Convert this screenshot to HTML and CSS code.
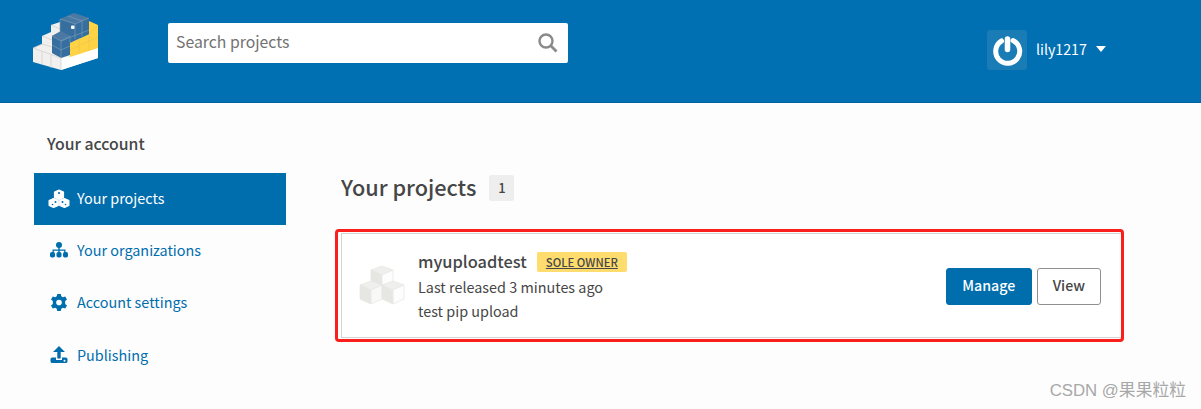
FILE: index.html
```html
<!DOCTYPE html>
<html lang="en">
<head>
<meta charset="utf-8">
<title>Your projects</title>
<link rel="stylesheet" href="styles.css">
</head>
<body>
<header class="site-header">
  <svg class="logo" width="68" height="60" viewBox="0 0 68 60" aria-hidden="true">
    <path d="M1 35 10 31V23L19 19V12L28 9 40 20 66 35V45L29 57 1 49Z" fill="#f1f0ee"/>
    <path d="M38 44 66 35V45L29 57V45Z" fill="#fff"/>
    <path d="M38 30 57 21V8L66 12V35L38 44Z" fill="#ffd343"/>
    <path d="M28 6 42 0 57 5V21L38 30V42L29 45 20 40V23L28 19Z" fill="#366f9f"/>
    <path d="M28 6 42 0 57 5 43 11Z" fill="#4a7aa3"/>
    <path d="M20 23 29 18 38 23 29 28Z" fill="#4a7aa3"/>
    <g fill="none" stroke="#c8c8c8" stroke-width="0.6">
      <path d="M1 35 29 45V57M10 38.500V52M19 42V55M10 23 20 27M10 31 20 34M19 12 28 16M1 35 10 31"/>
    </g>
    <g fill="none" stroke="#e8c552" stroke-width="0.6">
      <path d="M38 37 66 24M47 26V40.500M57 21V38M57 21 66 12"/>
    </g>
    <g fill="none" stroke="#7f9fbb" stroke-width="0.6">
      <path d="M28 6 43 11 57 5M43 11V26M50 8V24M29 28 57 17M36 3 50 8M20 23 29 28 38 23M29 28V45M20 32 29 37 38 33M38 23V30M28 6V19"/>
    </g>
    <rect x="39" y="12.500" width="3.500" height="3.500" rx="1" fill="#fff"/>
    <rect x="51.500" y="41.500" width="3.500" height="3.500" rx="1" fill="#fff"/>
  </svg>
  <form class="search">
    <span class="search-text">Search projects</span>
    <svg class="search-icon" width="20" height="20" viewBox="0 0 20 20" aria-hidden="true">
      <circle cx="8" cy="8" r="6.500" fill="none" stroke="#8a8a8a" stroke-width="2.400"/>
      <path d="M12.800 12.800 18.500 18.500" stroke="#8a8a8a" stroke-width="2.800" fill="none"/>
    </svg>
  </form>
  <div class="user">
    <span class="avatar">
      <svg width="32" height="32" viewBox="0 0 32 32" aria-hidden="true">
        <path d="M10.500 7A12 12 0 1 0 22 6.500" fill="none" stroke="#fff" stroke-width="5" stroke-linecap="round"/>
        <path d="M16.500 5V15.500" stroke="#fff" stroke-width="5.500" stroke-linecap="round" fill="none"/>
      </svg>
    </span>
    <span class="user-name">lily1217</span>
    <span class="caret"></span>
  </div>
</header>
<main class="layout">
  <aside class="sidebar">
    <h2 class="side-title">Your account</h2>
    <nav class="side-nav">
      <a class="side-link active">
        <svg class="side-icon" width="21" height="19" viewBox="0 0 21 19" aria-hidden="true"><path fill="currentColor" stroke="currentColor" stroke-width="1.200" stroke-linejoin="round" d="M10.500 1 15 3V8.500L10.500 10.500 6 8.500V3ZM5 9.500 9.800 11.500V16.500L5 18.500.6 16.500V11.500ZM16 9.500 20.400 11.500V16.500L16 18.500 11.200 16.500V11.500Z"/><g fill="#006dad"><circle cx="10.500" cy="4" r="1.100"/><circle cx="7" cy="13" r="1"/><circle cx="14" cy="13" r="1"/><circle cx="4" cy="15.500" r="0.800"/><circle cx="17" cy="15.500" r="0.800"/></g></svg>
        <span>Your projects</span>
      </a>
      <a class="side-link">
        <svg class="side-icon" width="19" height="16" viewBox="0 0 19 16" aria-hidden="true"><g fill="currentColor"><circle cx="9.500" cy="3" r="3"/><rect x="8.800" y="5" width="1.400" height="6"/><path d="M3 11V7.500H16V11H14.700V8.800H4.300V11Z"/><rect x="0.500" y="10" width="5" height="5.500" rx="1.800"/><rect x="7" y="10" width="5" height="5.500" rx="1.800"/><rect x="13.500" y="10" width="5" height="5.500" rx="1.800"/></g></svg>
        <span>Your organizations</span>
      </a>
      <a class="side-link">
        <svg class="side-icon" width="17" height="17" viewBox="0 0 24 24" aria-hidden="true"><path fill="currentColor" fill-rule="evenodd" d="M14.500 0 15.200 3.300 17.500 4.600 20.800 3.500 23.300 7.800 20.700 10V14L23.300 16.200 20.800 20.500 17.500 19.400 15.200 20.700 14.500 24H9.500L8.800 20.700 6.500 19.400 3.200 20.500.7 16.200 3.300 14V10L.7 7.800 3.200 3.500 6.500 4.600 8.800 3.300 9.500 0ZM12 8A4 4 0 1 0 12 16 4 4 0 1 0 12 8Z"/></svg>
        <span>Account settings</span>
      </a>
      <a class="side-link">
        <svg class="side-icon" width="17" height="17" viewBox="0 0 17 17" aria-hidden="true"><path fill="currentColor" d="M8.500 0 14.500 6H10.200V12.500H6.800V6H2.500ZM1.800 11.500H5.500V14H11.500V11.500H15.200C16.200 11.500 17 12.300 17 13.300V15.200C17 16.200 16.200 17 15.200 17H1.800C.8 17 0 16.200 0 15.200V13.300C0 12.300 .8 11.500 1.800 11.500Z"/><circle cx="14" cy="14.800" r="1" fill="#fdfdfd"/></svg>
        <span>Publishing</span>
      </a>
    </nav>
  </aside>
  <section class="content">
    <div class="content-head">
      <h1 class="content-title">Your projects</h1>
      <span class="count">1</span>
    </div>
    <div class="highlight">
      <article class="card">
        <svg class="card-art" width="59" height="42" viewBox="0 0 59 42" aria-hidden="true">
          <g stroke="#e8e7e4" stroke-width="0.8" stroke-linejoin="round">
            <path d="M12 5 23 1 34 5 23 10Z" fill="#efefed"/><path d="M12 5 23 10V24L12 19Z" fill="#e6e6e3"/><path d="M23 10 34 5V20L23 24Z" fill="#fdfdfd"/>
            <path d="M1 20 12 16 23 20 12 25Z" fill="#efefed"/><path d="M1 20 12 25V39L1 34Z" fill="#e6e6e3"/><path d="M12 25 23 20V34L12 39Z" fill="#f8f8f7"/>
            <path d="M23 20 34 16 45 20 34 25Z" fill="#efefed"/><path d="M23 20 34 25V39L23 34Z" fill="#e6e6e3"/><path d="M34 25 45 20V34L34 39Z" fill="#fdfdfd"/>
          </g>
        </svg>
        <div class="card-body">
          <div class="card-title-row">
            <h3 class="card-title">myuploadtest</h3>
            <span class="badge">SOLE OWNER</span>
          </div>
          <p class="card-line">Last released 3 minutes ago</p>
          <p class="card-line">test pip upload</p>
        </div>
        <div class="card-actions">
          <a class="btn btn-primary">Manage</a>
          <a class="btn">View</a>
        </div>
      </article>
    </div>
  </section>
</main>
<div class="watermark">CSDN @果果粒粒</div>
</body>
</html>
```
FILE: styles.css
```css
* { box-sizing: border-box; }
html, body { margin: 0; padding: 0; }
body {
  width: 1201px;
  height: 409px;
  overflow: hidden;
  position: relative;
  background: #fdfdfd;
  color: #464646;
  font-family: "Noto Sans CJK SC", "Noto Sans", sans-serif;
  font-size: 14.400px;
}
.site-header {
  height: 103px;
  background: #0070b3;
  border-bottom: 1px solid #00629c;
  display: flex;
  align-items: flex-start;
  padding: 13px 0 0 32px;
}
.logo { flex: none; }
.search {
  margin: 10px 0 0 68px;
  width: 400px;
  height: 40px;
  background: #fff;
  border-radius: 2px;
  display: flex;
  align-items: center;
  justify-content: space-between;
  padding: 0 10px 2px 8px;
}
.search-text { font-size: 15.800px; line-height: 22px; color: #727272; }
.search-icon { margin-top: 2px; }
.user {
  margin: 17px 0 0 419px;
  display: flex;
  align-items: center;
  padding-bottom: 0;
}
.avatar {
  width: 40px;
  height: 40px;
  background: #1a7cb5;
  border-radius: 3px;
  display: flex;
  align-items: center;
  justify-content: center;
}
.user-name { margin: 0 0 3px 9px; font-size: 14.200px; line-height: 24px; color: #fff; }
.caret {
  margin: 0 0 2px 9px;
  width: 0;
  height: 0;
  border-left: 5.500px solid transparent;
  border-right: 5.500px solid transparent;
  border-top: 6px solid #fff;
}
.layout { display: flex; align-items: flex-start; padding-left: 34px; }
.sidebar { width: 252px; flex: none; }
.side-title {
  margin: 29px 0 17px 13px;
  font-size: 15.800px;
  line-height: 24px;
  font-weight: 500;
  color: #464646;
}
.side-nav { display: flex; flex-direction: column; }
.side-link {
  height: 52.300px;
  display: flex;
  align-items: center;
  padding-left: 14px;
  padding-bottom: 2px;
  font-size: 14.400px;
  line-height: 24px;
  color: #006dad;
}
.side-link.active { height: 52px; background: #006dad; color: #fff; }
.side-icon { flex: none; width: 22px; margin-right: 7px; }
.content { width: 789px; margin-left: 49px; }
.content-head { display: flex; align-items: flex-start; margin-top: 69px; padding-left: 6px; }
.content-title {
  margin: 0;
  font-size: 21.700px;
  line-height: 30px;
  font-weight: 500;
  color: #464646;
}
.count {
  margin: 3px 0 0 13px;
  width: 25px;
  height: 26px;
  border-radius: 2px;
  background: #eee;
  color: #464646;
  font-size: 13px;
  font-weight: 500;
  line-height: 26px;
  text-align: center;
}
.highlight {
  margin-top: 27px;
  height: 113px;
  border: 3px solid #fa1f1a;
  border-radius: 4px;
  padding: 1px 0 0 3px;
}
.card {
  height: 105px;
  background: #fff;
  border: 1px solid #d3d3d3;
  border-right: 0;
  display: flex;
  align-items: flex-start;
  padding: 0 20px 0 17px;
}
.card-art { flex: none; margin-top: 31px; }
.card-body { padding-top: 13px; flex: 1; }
.card-title-row { display: flex; align-items: center; height: 28px; }
.card-title {
  margin: 0;
  font-size: 16.400px;
  line-height: 24px;
  font-weight: 500;
  color: #464646;
}
.badge {
  margin: 2px 0 0 10px;
  height: 20px;
  padding: 0 9px;
  border-radius: 2px;
  background: #ffdc6e;
  color: #464646;
  font-size: 11.300px;
  font-weight: 500;
  line-height: 20px;
  text-decoration: underline;
}
.card-line { margin: 0; font-size: 14.400px; line-height: 24px; color: #464646; }
.card-actions { display: flex; gap: 5px; margin-top: 34px; }
.btn {
  height: 37px;
  padding: 0 15px;
  border: 1px solid #909090;
  border-radius: 3px;
  background: #fff;
  font-size: 14.200px;
  font-weight: 500;
  line-height: 33px;
  color: #464646;
}
.btn-primary { background: #006dad; border-color: #006dad; color: #fff; padding: 0 15.500px; }
.watermark {
  position: absolute;
  right: 15px;
  top: 381px;
  font-family: "Liberation Sans", "Noto Sans CJK SC", sans-serif;
  font-size: 16.800px;
  line-height: 20px;
  color: #a8a8a8;
}
```
